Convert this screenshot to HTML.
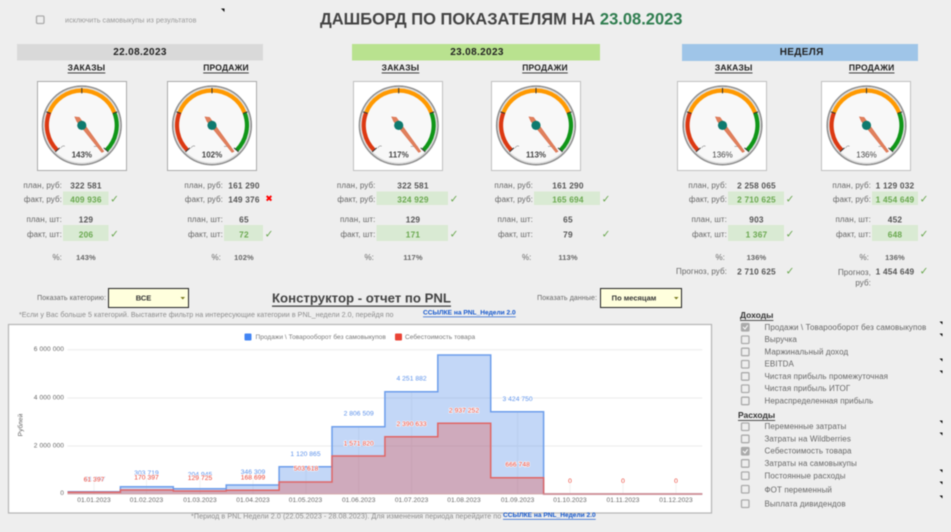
<!DOCTYPE html>
<html lang="ru"><head><meta charset="utf-8"><title>Дашборд</title>
<style>
html,body{margin:0;padding:0;background:#eee;width:951px;height:532px;overflow:hidden}
svg{display:block;filter:blur(.5px)}
text{font-family:"Liberation Sans","DejaVu Sans",sans-serif;dominant-baseline:central}
.m{text-anchor:middle}.e{text-anchor:end}
.lb{font-size:8px;fill:#666;text-anchor:end;letter-spacing:.1px}
.v{font-size:8.3px;fill:#555;font-weight:bold;text-anchor:middle;letter-spacing:.2px}
.g{font-size:8.3px;fill:#6aa84f;font-weight:bold;text-anchor:middle;letter-spacing:.2px}
.p{font-size:7.5px;fill:#666;font-weight:bold;text-anchor:middle;letter-spacing:.15px}
.ck{font-family:"DejaVu Sans",sans-serif;font-size:10.5px;fill:#6aa84f;font-weight:bold;text-anchor:middle}
.h{font-size:10px;font-weight:bold;fill:#222;text-anchor:middle;letter-spacing:.35px}
.s{font-size:8.5px;font-weight:bold;fill:#222;text-anchor:middle;text-decoration:underline;letter-spacing:.2px}
.pc{font-size:8px;font-weight:bold;fill:#444;text-anchor:middle}
.y{font-size:6.6px;fill:#666;text-anchor:end;letter-spacing:.1px}
.x{font-size:6.6px;fill:#666;text-anchor:middle;letter-spacing:.05px}
.bl{font-size:6.7px;fill:#5a90ea;text-anchor:middle;paint-order:stroke;stroke:#fff;stroke-width:1.2px;letter-spacing:.05px}
.rl{font-size:6.7px;fill:#ea4335;text-anchor:middle;paint-order:stroke;stroke:#fff;stroke-width:1.2px;letter-spacing:.05px}
.t{font-size:8px;fill:#666;letter-spacing:.1px}
.sec{font-size:8.5px;font-weight:bold;fill:#333;text-decoration:underline}
.cb{fill:none;stroke:#aaa;stroke-width:1.3}
.cbc{fill:#aaa;stroke:#aaa;stroke-width:1.3}
.tk{fill:none;stroke:#fff;stroke-width:1.2}
.n{font-size:7.1px;fill:#8a8a8a;letter-spacing:.05px}
.lk{font-size:6.6px;font-weight:bold;fill:#1155cc;text-decoration:underline}
.mk{fill:#111}
</style></head><body>
<svg width="951" height="532" viewBox="0 0 951 532" xmlns="http://www.w3.org/2000/svg">
<defs>
<g id="ga">
<circle r="39.3" fill="#f8f8f8" stroke="#8c8c8c" stroke-width="1.5"/>
<circle r="37.9" fill="none" stroke="#d8d8d8" stroke-width="1.2"/>
<g fill="none" stroke-width="4.2">
<path d="M-24.7 24.7A35 35 0 0 1-32.7-12.4" stroke="#dc3912"/>
<path d="M-32.7-12.4A35 35 0 0 1 32.7-12.4" stroke="#ff9900"/>
<path d="M32.7-12.4A35 35 0 0 1 24.7 24.7" stroke="#109618"/>
</g>
<g stroke="#333" stroke-width="1" fill="none">
<path d="M0-37.5V-32"/><path d="M-35.5-13.5L-31-12"/><path d="M35.5-13.5L31-12"/><path d="M-26.5 26.5L-22 22.5"/><path d="M26.5 26.5L22 22.5"/>
</g>
<path d="M-21 22.5q2-3 4-1.5M12 21h7" fill="none" stroke="#999" stroke-width=".7"/>
</g>
<g id="nd">
<path d="M-7-8.5L-2.5-8L22 26L20 27L-5-4Z" fill="#e0805c" stroke="#dc7050" stroke-width=".6"/>
<circle r="4.6" fill="#0e7a6e"/>
</g>
</defs>
<rect width="951" height="532" fill="#eee"/>

<!-- top -->
<rect x="36.5" y="16" width="7.5" height="7.5" rx="1.2" class="cb"/>
<text x="65" y="20" class="n" style="font-size:7.2px;fill:#999">исключить самовыкупы из результатов</text>
<path d="M221 8.5h3.5v3.5z" class="mk"/>
<text x="320" y="19.5" style="font-size:16.5px;font-weight:bold;fill:#434343">ДАШБОРД ПО ПОКАЗАТЕЛЯМ НА <tspan style="fill:#2f7d4f">23.08.2023</tspan></text>

<!-- header bands -->
<rect x="17" y="44" width="246" height="16.5" fill="#d9d9d9"/>
<rect x="352" y="44" width="248" height="16.5" fill="#b9e28f"/>
<rect x="682" y="44" width="236" height="17" fill="#9fc5e8"/>
<text x="140" y="52.7" class="h">22.08.2023</text>
<text x="477" y="52.7" class="h">23.08.2023</text>
<text x="801.7" y="52.7" class="h">НЕДЕЛЯ</text>
<text x="86.5" y="67.5" class="s">ЗАКАЗЫ</text>
<text x="226" y="67.5" class="s">ПРОДАЖИ</text>
<text x="400.5" y="67.5" class="s">ЗАКАЗЫ</text>
<text x="545" y="67.5" class="s">ПРОДАЖИ</text>
<text x="733.7" y="67.5" class="s">ЗАКАЗЫ</text>
<text x="871.7" y="67.5" class="s">ПРОДАЖИ</text>

<!-- gauges -->
<g fill="#fff" stroke="#aaa" stroke-width="1">
<rect x="37.5" y="81.5" width="89" height="89"/>
<rect x="167.5" y="81.5" width="89" height="89"/>
</g>
<g fill="#fff" stroke="#c0c0c0" stroke-width="1">
<rect x="353.5" y="81.5" width="89" height="89"/>
<rect x="491.5" y="81.5" width="89" height="89"/>
<rect x="677.5" y="81.5" width="89" height="89"/>
<rect x="821.5" y="81.5" width="89" height="89"/>
</g>
<g transform="translate(81.8 125.4)"><use href="#ga"/><use href="#nd"/><text y="29.5" class="pc">143%</text></g>
<g transform="translate(212 125.4)"><use href="#ga"/><use href="#nd"/><text y="29.5" class="pc">102%</text></g>
<g transform="translate(398.7 125.4)"><use href="#ga"/><use href="#nd"/><text y="29.5" class="pc">117%</text></g>
<g transform="translate(536 125.4)"><use href="#ga"/><use href="#nd"/><text y="29.5" class="pc">113%</text></g>
<g transform="translate(722.5 125.4)"><use href="#ga"/><use href="#nd"/><text y="29.5" class="pc" style="font-weight:normal">136%</text></g>
<g transform="translate(866.5 125.4)"><use href="#ga"/><use href="#nd"/><text y="29.5" class="pc" style="font-weight:normal">136%</text></g>

<!-- green boxes -->
<g fill="#d9ead3">
<rect x="63" y="191.5" width="45.5" height="13.5"/><rect x="63" y="225" width="45.5" height="16"/>
<rect x="224" y="225" width="39" height="16"/>
<rect x="376.5" y="191.5" width="71.5" height="13.5"/><rect x="376.5" y="225" width="71.5" height="16"/>
<rect x="534" y="191.5" width="66" height="13.5"/>
<rect x="728" y="191.5" width="56" height="13.5"/><rect x="728" y="225" width="56" height="16"/>
<rect x="872" y="191.5" width="46" height="13.5"/><rect x="872" y="225" width="46" height="16"/>
</g>

<!-- col 1 -->
<text x="62" y="185.3" class="lb">план, руб:</text><text x="86" y="185.3" class="v">322 581</text>
<text x="62" y="199.3" class="lb">факт, руб:</text><text x="86" y="199.3" class="g">409 936</text><text x="114.5" y="199.3" class="ck">✓</text>
<text x="62" y="219.7" class="lb">план, шт:</text><text x="86" y="219.7" class="v">129</text>
<text x="62" y="234.5" class="lb">факт, шт:</text><text x="86" y="234.5" class="g">206</text><text x="114.5" y="234.5" class="ck">✓</text>
<text x="62" y="257.3" class="lb">%:</text><text x="86" y="257.3" class="p">143%</text>
<!-- col 2 -->
<text x="223" y="185.3" class="lb">план, руб:</text><text x="244" y="185.3" class="v">161 290</text>
<text x="223" y="199.3" class="lb">факт, руб:</text><text x="244" y="199.3" class="v">149 376</text><text x="269" y="199.3" class="ck" style="fill:#f00;font-size:9px">✖</text>
<text x="223" y="219.7" class="lb">план, шт:</text><text x="244" y="219.7" class="v">65</text>
<text x="223" y="234.5" class="lb">факт, шт:</text><text x="244" y="234.5" class="g">72</text><text x="269" y="234.5" class="ck">✓</text>
<text x="221" y="257.3" class="lb">%:</text><text x="244" y="257.3" class="p">102%</text>
<!-- col 3 -->
<text x="375.5" y="185.3" class="lb">план, руб:</text><text x="413" y="185.3" class="v">322 581</text>
<text x="375.5" y="199.3" class="lb">факт, руб:</text><text x="413" y="199.3" class="g">324 929</text><text x="454" y="199.3" class="ck">✓</text>
<text x="375.5" y="219.7" class="lb">план, шт:</text><text x="413" y="219.7" class="v">129</text>
<text x="375.5" y="234.5" class="lb">факт, шт:</text><text x="413" y="234.5" class="g">171</text><text x="454" y="234.5" class="ck">✓</text>
<text x="374" y="257.3" class="lb">%:</text><text x="413" y="257.3" class="p">117%</text>
<!-- col 4 -->
<text x="533" y="185.3" class="lb">план, руб:</text><text x="568" y="185.3" class="v">161 290</text>
<text x="533" y="199.3" class="lb">факт, руб:</text><text x="568" y="199.3" class="g">165 694</text><text x="606" y="199.3" class="ck">✓</text>
<text x="533" y="219.7" class="lb">план, шт:</text><text x="568" y="219.7" class="v">65</text>
<text x="533" y="234.5" class="lb">факт, шт:</text><text x="568" y="234.5" class="v">79</text><text x="606" y="234.5" class="ck">✓</text>
<text x="531.5" y="257.3" class="lb">%:</text><text x="568" y="257.3" class="p">113%</text>
<!-- col 5 -->
<text x="727" y="185.3" class="lb">план, руб:</text><text x="756.5" y="185.3" class="v">2 258 065</text>
<text x="727" y="199.3" class="lb">факт, руб:</text><text x="756.5" y="199.3" class="g">2 710 625</text><text x="790" y="199.3" class="ck">✓</text>
<text x="727" y="219.7" class="lb">план, шт:</text><text x="756.5" y="219.7" class="v">903</text>
<text x="727" y="234.5" class="lb">факт, шт:</text><text x="756.5" y="234.5" class="g">1 367</text><text x="790" y="234.5" class="ck">✓</text>
<text x="725" y="257.3" class="lb">%:</text><text x="756.5" y="257.3" class="p">136%</text>
<text x="727" y="271.5" class="lb">Прогноз, руб:</text><text x="756.5" y="271.3" class="v">2 710 625</text><text x="790" y="271.3" class="ck">✓</text>
<!-- col 6 -->
<text x="871" y="185.3" class="lb">план, руб:</text><text x="895" y="185.3" class="v">1 129 032</text>
<text x="871" y="199.3" class="lb">факт, руб:</text><text x="895" y="199.3" class="g">1 454 649</text><text x="924" y="199.3" class="ck">✓</text>
<text x="871" y="219.7" class="lb">план, шт:</text><text x="895" y="219.7" class="v">452</text>
<text x="871" y="234.5" class="lb">факт, шт:</text><text x="895" y="234.5" class="g">648</text><text x="924" y="234.5" class="ck">✓</text>
<text x="869" y="257.3" class="lb">%:</text><text x="895" y="257.3" class="p">136%</text>
<text x="871" y="272.5" class="lb">Прогноз,</text><text x="871" y="283" class="lb">руб:</text><text x="895" y="271.3" class="v">1 454 649</text><text x="924" y="271.3" class="ck">✓</text>

<!-- controls -->
<text x="106" y="298.5" class="lb" style="font-size:7px">Показать категорию:</text>
<rect x="108.5" y="288.5" width="80" height="19" fill="#ffd" stroke="#222" stroke-width="1"/>
<text x="143.5" y="298" class="m" style="font-size:7.5px;font-weight:bold;fill:#333">ВСЕ</text>
<path d="M180.5 297h4.5l-2.25 2.5z" fill="#7a7a1e"/>
<text x="597" y="298.5" class="lb" style="font-size:7px">Показать данные:</text>
<rect x="600.5" y="288.5" width="81" height="19" fill="#ffd" stroke="#222" stroke-width="1"/>
<text x="634" y="298" class="m" style="font-size:7.5px;font-weight:bold;fill:#333">По месяцам</text>
<path d="M674 297h4.5l-2.25 2.5z" fill="#7a7a1e"/>
<text x="272" y="298" style="font-size:13.2px;font-weight:bold;fill:#434343;text-decoration:underline">Конструктор - отчет по PNL</text>
<text x="19" y="315" class="n">*Если у Вас больше 5 категорий. Выставите фильтр на интересующие категории в PNL_недели 2.0, перейдя по</text>
<text x="423" y="313" class="lk">ССЫЛКЕ на PNL_Недели 2.0</text>

<!-- chart -->
<rect x="8.5" y="324.5" width="703" height="188.5" fill="#fff" stroke="#b5b5b5" stroke-width="1.2"/>
<g stroke="#ececec" stroke-width="1"><path d="M67.5 349.8H702.3M67.5 398H702.3M67.5 446H702.3"/></g>
<g stroke="#f2f2f2" stroke-width="1"><path d="M94 478V494M146.5 478V494M200 478V494M253 478V494M306 466V494M358.7 426V494M411.6 392V494M517.6 412V494M570 484V494M623 484V494M676 484V494"/></g>
<path d="M67.5 494V491.8H120.4V486.7H173.3V488.7H226.2V485H279.1V466.7H332V426.7H384.9V391.7H437.8V355H490.7V411.7H543.6V494Z" fill="#4a86e8" fill-opacity=".33"/>
<path d="M67.5 494V492.3H120.4V490H173.3V491H226.2V490.3H279.1V482H332V456H384.9V436.7H437.8V423.3H490.7V477.7H543.6V494Z" fill="#ea4335" fill-opacity=".3"/>
<path d="M67.5 491.8H120.4V486.7H173.3V488.7H226.2V485H279.1V466.7H332V426.7H384.9V391.7H437.8V355H490.7V411.7H543.6V494H702.3" fill="none" stroke="#6d9eeb" stroke-width="1.5"/>
<path d="M67.5 492.3H120.4V490H173.3V491H226.2V490.3H279.1V482H332V456H384.9V436.7H437.8V423.3H490.7V477.7H543.6V494H702.3" fill="none" stroke="#e06666" stroke-width="1.5"/>
<path d="M67.5 494H702.3" stroke="#d0a0a0" stroke-width=".8"/>

<rect x="244.5" y="333.5" width="7" height="7" rx="1" fill="#4285f4"/>
<text x="255.5" y="337.3" class="n" style="font-size:6.5px;fill:#777">Продажи \ Товарооборот без самовыкупов</text>
<rect x="395" y="333.5" width="7" height="7" rx="1" fill="#ea4335"/>
<text x="405" y="337.3" class="n" style="font-size:6.5px;fill:#777">Себестоимость товара</text>

<text x="64" y="349.5" class="y">6 000 000</text>
<text x="64" y="398" class="y">4 000 000</text>
<text x="64" y="446" class="y">2 000 000</text>
<text x="64" y="493.5" class="y">0</text>
<text transform="translate(21 425) rotate(-90)" class="x" style="font-size:6.6px">Рублей</text>

<g>
<text x="94" y="500.5" class="x">01.01.2023</text><text x="146.5" y="500.5" class="x">01.02.2023</text><text x="200" y="500.5" class="x">01.03.2023</text><text x="253" y="500.5" class="x">01.04.2023</text><text x="305.5" y="500.5" class="x">01.05.2023</text><text x="358.7" y="500.5" class="x">01.06.2023</text><text x="411.6" y="500.5" class="x">01.07.2023</text><text x="464" y="500.5" class="x">01.08.2023</text><text x="517.6" y="500.5" class="x">01.09.2023</text><text x="570" y="500.5" class="x">01.10.2023</text><text x="623" y="500.5" class="x">01.11.2023</text><text x="676" y="500.5" class="x">01.12.2023</text>
</g>
<g>
<text x="95" y="479.5" class="bl">61 397</text>
<text x="146.5" y="473.3" class="bl">303 719</text>
<text x="200" y="475" class="bl">204 945</text>
<text x="253" y="472.5" class="bl">346 309</text>
<text x="305.5" y="454.7" class="bl">1 120 865</text>
<text x="358.7" y="414" class="bl">2 806 509</text>
<text x="411.6" y="379" class="bl">4 251 882</text>
<text x="517.6" y="399.7" class="bl">3 424 750</text>
<text x="94" y="480" class="rl">61 397</text>
<text x="146.5" y="478" class="rl">170 397</text>
<text x="200" y="478.7" class="rl">129 725</text>
<text x="253" y="478" class="rl">168 699</text>
<text x="306" y="469" class="rl">503 618</text>
<text x="358.7" y="444" class="rl">1 571 820</text>
<text x="411.6" y="424.7" class="rl">2 390 633</text>
<text x="464" y="411" class="rl">2 937 252</text>
<text x="517.6" y="465" class="rl">666 748</text>
<text x="570" y="481.7" class="rl">0</text>
<text x="623" y="481.7" class="rl">0</text>
<text x="676" y="481.7" class="rl">0</text>
</g>
<text x="191" y="516" class="n" style="font-size:7.2px">*Период в PNL Недели 2.0 (22.05.2023 - 28.08.2023). Для изменения периода перейдите по</text>
<text x="503" y="515.5" class="lk">ССЫЛКЕ на PNL_Недели 2.0</text>

<!-- right panel -->
<text x="740" y="315" class="sec">Доходы</text>
<rect x="741.5" y="323.5" width="7.5" height="7.5" rx="1" class="cbc"/><path d="M743 327l2 2 2.7-3.7" fill="none" stroke="#fff" stroke-width="1"/>
<text x="764.5" y="327.3" class="t">Продажи \ Товарооборот без самовыкупов</text>
<rect x="741.5" y="336" width="7.5" height="7.5" rx="1" class="cb"/><text x="764.5" y="339.5" class="t">Выручка</text>
<rect x="741.5" y="348.2" width="7.5" height="7.5" rx="1" class="cb"/><text x="764.5" y="351.8" class="t">Маржинальный доход</text>
<rect x="741.5" y="360.5" width="7.5" height="7.5" rx="1" class="cb"/><text x="764.5" y="364" class="t">EBITDA</text>
<rect x="741.5" y="372.7" width="7.5" height="7.5" rx="1" class="cb"/><text x="764.5" y="376.3" class="t">Чистая прибыль промежуточная</text>
<rect x="741.5" y="385" width="7.5" height="7.5" rx="1" class="cb"/><text x="764.5" y="388.5" class="t">Чистая прибыль  ИТОГ</text>
<rect x="741.5" y="397.2" width="7.5" height="7.5" rx="1" class="cb"/><text x="764.5" y="401" class="t">Нераспределенная прибыль</text>
<text x="738" y="415" class="sec">Расходы</text>
<rect x="741.5" y="423" width="7.5" height="7.5" rx="1" class="cb"/><text x="764.5" y="426.7" class="t">Переменные затраты</text>
<rect x="741.5" y="435.2" width="7.5" height="7.5" rx="1" class="cb"/><text x="764.5" y="439" class="t">Затраты на Wildberries</text>
<rect x="741.5" y="447.5" width="7.5" height="7.5" rx="1" class="cbc"/><path d="M743 451l2 2 2.7-3.7" fill="none" stroke="#fff" stroke-width="1"/><text x="764.5" y="451.2" class="t">Себестоимость товара</text>
<rect x="741.5" y="459.7" width="7.5" height="7.5" rx="1" class="cb"/><text x="764.5" y="463.5" class="t">Затраты на самовыкупы</text>
<rect x="741.5" y="472" width="7.5" height="7.5" rx="1" class="cb"/><text x="764.5" y="476" class="t">Постоянные расходы</text>
<rect x="741.5" y="485.5" width="7.5" height="7.5" rx="1" class="cb"/><text x="764.5" y="490" class="t">ФОТ переменный</text>
<rect x="741.5" y="500" width="7.5" height="7.5" rx="1" class="cb"/><text x="764.5" y="504" class="t">Выплата дивидендов</text>
<g class="mk">
<path d="M939.5 321.5h3v3z"/><path d="M939.5 333.5h3v3z"/><path d="M939.5 358.5h3v3z"/><path d="M939.5 370.5h3v3z"/><path d="M939.5 420.5h3v3z"/><path d="M939.5 432.5h3v3z"/><path d="M939.5 469.5h3v3z"/><path d="M939.5 481.5h3v3z"/><path d="M939.5 495.5h3v3z"/>
</g>
</svg>
</body></html>
